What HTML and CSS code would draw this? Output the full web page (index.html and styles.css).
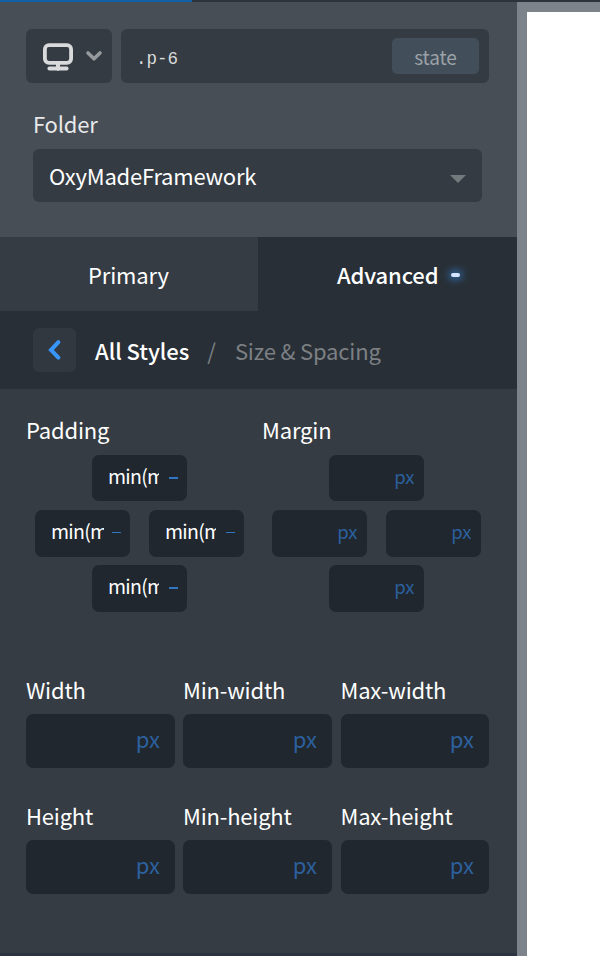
FILE: index.html
```html
<!DOCTYPE html>
<html lang="en">
<head>
  <meta charset="UTF-8">
  <meta name="viewport" content="width=device-width, initial-scale=1.0">
  <title>Size &amp; Spacing</title>
  <link rel="stylesheet" href="styles.css">
</head>
<body>
  <div class="topbar"><div class="topbar-active"></div></div>
  <div class="builder">
    <div class="sidebar">
      <div class="selector">
        <div class="selector-row">
          <div class="media-button">
            <svg width="32" height="30" viewBox="0 0 32 30">
              <rect x="2.9" y="3.2" width="26.2" height="17.6" rx="4" fill="none" stroke="#d9dadb" stroke-width="3.8"/>
              <path d="M16 21v6M7.4 26.5h17.2" fill="none" stroke="#d9dadb" stroke-width="4" stroke-linecap="round"/>
            </svg>
            <svg class="media-arrow" width="18" height="12" viewBox="0 0 18 12">
              <path d="M3 3l6 5.8L15 3" fill="none" stroke="#969a9d" stroke-width="3.6" stroke-linecap="round" stroke-linejoin="round"/>
            </svg>
          </div>
          <div class="class-box">
            <span class="class-name">.p-6</span>
            <span class="state">state</span>
          </div>
        </div>
        <div class="folder">
          <div class="label">Folder</div>
          <div class="select">
            <span>OxyMadeFramework</span>
            <span class="caret"></span>
          </div>
        </div>
      </div>

      <div class="tabs">
        <div class="tab">Primary</div>
        <div class="tab active">Advanced<span class="dot"></span></div>
      </div>

      <div class="breadcrumb">
        <div class="back">
          <svg width="16" height="22" viewBox="0 0 16 22">
            <path d="M11.4 3.2L4 11l7.4 7.6" fill="none" stroke="#3896fb" stroke-width="4" stroke-linecap="round"/>
          </svg>
        </div>
        <span class="crumb">All Styles</span>
        <span class="slash">/</span>
        <span class="current">Size &amp; Spacing</span>
      </div>

      <div class="controls">
        <div class="spacing">
          <div class="spacing-group">
            <div class="label wide">Padding</div>
            <div class="box-model">
              <div class="input small top"><span class="value">min(m</span><span class="dash thick"></span></div>
              <div class="input small"><span class="value long">min(m</span><span class="dash"></span></div>
              <div class="input small"><span class="value">min(m</span><span class="dash"></span></div>
              <div class="input small top"><span class="value">min(m</span><span class="dash thick"></span></div>
            </div>
          </div>
          <div class="spacing-group">
            <div class="label wide">Margin</div>
            <div class="box-model">
              <div class="input small top"><span class="unit">px</span></div>
              <div class="input small"><span class="unit">px</span></div>
              <div class="input small"><span class="unit">px</span></div>
              <div class="input small top"><span class="unit">px</span></div>
            </div>
          </div>
        </div>

        <div class="sizes">
          <div class="size"><div class="label">Width</div><div class="input"><span class="unit">px</span></div></div>
          <div class="size"><div class="label">Min-width</div><div class="input"><span class="unit">px</span></div></div>
          <div class="size"><div class="label">Max-width</div><div class="input"><span class="unit">px</span></div></div>
          <div class="size"><div class="label">Height</div><div class="input"><span class="unit">px</span></div></div>
          <div class="size"><div class="label">Min-height</div><div class="input"><span class="unit">px</span></div></div>
          <div class="size"><div class="label">Max-height</div><div class="input"><span class="unit">px</span></div></div>
        </div>
      </div>
    </div>
    <div class="canvas"></div>
  </div>
</body>
</html>
```
FILE: styles.css
```css
* {
  box-sizing: border-box;
}
body {
  margin: 0;
  height: 956px;
  overflow: hidden;
  font-family: "Noto Sans CJK SC", "Open Sans", sans-serif;
  font-size: 22px;
  line-height: 32px;
  color: #fff;
  background: #7c838b;
  display: flex;
  flex-direction: column;
}
.topbar {
  height: 2px;
  flex: none;
  background: #2b333b;
}
.topbar-active {
  width: 192px;
  height: 2px;
  background: #1260a8;
}
.builder {
  flex: 1;
  display: flex;
}
.sidebar {
  width: 517px;
  flex: none;
  display: flex;
  flex-direction: column;
  background: #353c43;
}
.canvas {
  flex: 1;
  margin: 10px 0 0 10px;
  background: #fff;
}

/* selector */
.selector {
  height: 235px;
  padding: 27px 28px 0 26px;
  background: #474e55;
}
.selector-row {
  display: flex;
  gap: 9px;
}
.media-button {
  width: 86px;
  height: 54px;
  border-radius: 6px;
  background: #343b42;
  display: flex;
  align-items: center;
  padding-left: 16px;
}
.media-button svg {
  margin-top: 2px;
}
.media-button .media-arrow {
  margin: 0 0 1px 11px;
}
.class-box {
  flex: 1;
  height: 54px;
  border-radius: 6px;
  background: #343b42;
  display: flex;
  align-items: center;
  justify-content: space-between;
  padding: 0 10px 0 15px;
}
.class-name {
  font-family: "Liberation Mono", monospace;
  font-size: 17.5px;
  color: #d9dadb;
  padding-top: 5px;
}
.state {
  width: 87px;
  height: 36px;
  line-height: 37px;
  border-radius: 5px;
  background: #424f5b;
  color: #9ca2a7;
  font-size: 19px;
  letter-spacing: -0.1px;
  text-align: center;
}
.label {
  height: 32px;
  line-height: 30px;
  letter-spacing: -0.2px;
  white-space: nowrap;
}
.label.wide {
  line-height: 29px;
  letter-spacing: -0.15px;
}
.folder {
  margin: 26px 7px 0;
}
.folder .label {
  line-height: 28px;
  color: #e8e9ea;
}
.select {
  height: 53px;
  margin-top: 8px;
  padding: 0 16px 2px;
  border-radius: 6px;
  background: #343b42;
  display: flex;
  align-items: center;
  justify-content: space-between;
  letter-spacing: -0.22px;
}
.caret {
  margin-top: 8px;
  border: 8px solid transparent;
  border-top-color: #74797d;
  border-bottom: 0;
}

/* tabs */
.tabs {
  display: flex;
  height: 74px;
  background: #282f36;
}
.tab {
  width: 258px;
  line-height: 74px;
  text-align: center;
  letter-spacing: -0.15px;
  background: #353c43;
  padding-right: 1px;
}
.tab.active {
  display: flex;
  align-items: center;
  padding-left: 79px;
  font-weight: 500;
  background: #282f36;
}
.dot {
  width: 9px;
  height: 4px;
  margin: 2px 0 0 13px;
  border-radius: 2px;
  background: #d6e5ff;
  box-shadow: 0 0 8px 2px #3575bd;
}
.breadcrumb {
  height: 78px;
  padding: 0 33px;
  background: #282f36;
  display: flex;
  align-items: center;
  line-height: 78px;
}
.back {
  width: 43px;
  height: 44px;
  border-radius: 6px;
  background: #31383f;
  display: flex;
  align-items: center;
  justify-content: center;
}
.crumb {
  font-weight: 500;
  margin-left: 19px;
  letter-spacing: -0.05px;
}
.slash {
  color: #7c8084;
  margin: 0 19px 0 18px;
}
.current {
  color: #7c8084;
  letter-spacing: -0.18px;
}

/* controls */
.controls {
  flex: 1;
  padding: 26px 28px 0 26px;
  border-bottom: 3px solid #2c3340;
}
.spacing {
  display: flex;
  gap: 18px;
}
.spacing-group {
  width: 218px;
}
.box-model {
  display: grid;
  grid-template-columns: 95px 95px;
  grid-template-rows: 46px 47px 47px;
  justify-content: space-between;
  row-gap: 8.5px;
  margin: 8px 0 0 9px;
}
.spacing-group + .spacing-group .box-model {
  margin: 8px -0.5px 0 9.5px;
}
.input {
  height: 54px;
  padding: 0 15px 6px;
  border-radius: 7px;
  background: #20272e;
  display: flex;
  align-items: center;
  justify-content: flex-end;
}
.input.small {
  height: auto;
  padding: 0 9px 5px 16px;
  font-size: 19.5px;
}
.input.top {
  grid-column: 1 / 3;
  justify-self: center;
  width: 95px;
}
.unit {
  color: #2c609e;
}
.small .unit {
  font-size: 18.5px;
}
/* long values are clipped before the unit */
.value {
  width: 51px;
  margin-right: auto;
  overflow: hidden;
  letter-spacing: -0.7px;
}
.value.long {
  width: 53px;
}
.dash {
  width: 9px;
  height: 1px;
  margin-top: 4px;
  background: #2f75c2;
}
.dash.thick {
  height: 2px;
}
.sizes {
  display: grid;
  grid-template-columns: 149px 149px 148px;
  column-gap: 8px;
  row-gap: 32px;
  margin-top: 62px;
}
.size:nth-child(3n) {
  margin: 0 -1px 0 1px;
}
.size .label {
  margin-bottom: 8px;
}
.size:nth-child(3n) .label {
  margin-left: -0.5px;
}
```
